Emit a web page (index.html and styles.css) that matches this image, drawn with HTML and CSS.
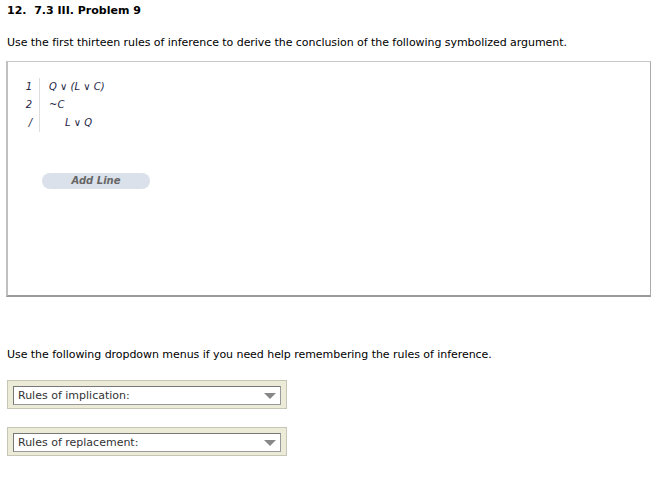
FILE: index.html
```html
<!DOCTYPE html>
<html lang="en">
<head>
    <meta charset="utf-8">
    <title>7.3 III. Problem 9</title>
    <link rel="stylesheet" href="styles.css">
</head>
<body>
    <div id="problem">
        <h1 class="title">12.&nbsp; 7.3 III. Problem 9</h1>
        <p class="instr">Use the first thirteen rules of inference to derive the conclusion of the following symbolized argument.</p>

        <div id="proof">
            <div class="lines">
                <div class="nums">
                    <div>1</div>
                    <div>2</div>
                    <div>/</div>
                </div>
                <div class="formulas">
                    <div>Q &or; (L &or; C)</div>
                    <div>~C</div>
                    <div class="concl">L &or; Q</div>
                </div>
            </div>
            <div class="add-line">Add Line</div>
        </div>

        <p class="instr help">Use the following dropdown menus if you need help remembering the rules of inference.</p>

        <div class="menu">
            <div class="select"><span>Rules of implication:</span><i class="arrow"></i></div>
        </div>
        <div class="menu">
            <div class="select"><span>Rules of replacement:</span><i class="arrow"></i></div>
        </div>
    </div>
</body>
</html>
```

FILE: styles.css
```css
html,body{
    margin: 0;
    background-color: white;
}
#problem{
    padding: 4px 7px;
    font-family: "DejaVu Sans", Verdana, sans-serif;
    font-size: 11px;
    color: #000;
}
#problem .title{
    margin: 0;
    font-size: 11px;
    font-weight: bold;
    line-height: 14px;
}
#problem .instr{
    margin: 18px 0 0 0;
    line-height: 14px;
    letter-spacing: -0.05px;
}
#problem .help{
    margin-top: 51px;
}

#proof{
    margin: 11px 14px 0 -1px;
    height: 233px;
    border: 1px solid #aaa;
    border-top-color: #c8c8c8;
    border-left: 2px solid #c0c0c0;
    border-bottom: 2px solid #999;
    position: relative;
}
#proof .lines{
    display: flex;
    margin-top: 16px;
}
#proof .nums{
    width: 24px;
    padding-right: 7px;
    text-align: right;
    font-style: italic;
    font-size: 10px;
    color: #224;
    border-right: 1px solid #ddd;
    line-height: 18px;
}
#proof .formulas{
    padding-left: 9px;
    font-size: 10px;
    font-style: italic;
    color: #224;
    line-height: 18px;
}
#proof .concl{
    padding-left: 16px;
}
#proof .add-line{
    margin: 41px 0 0 34px;
    width: 108px;
    height: 16px;
    line-height: 16px;
    border-radius: 8px;
    background-color: #dbe1ea;
    text-align: center;
    font-size: 10px;
    font-weight: bold;
    font-style: italic;
    color: #666;
}

.menu{
    margin-top: 18px;
    width: 268px;
    padding: 5px 5px 3px 5px;
    background-color: #ecebd8;
    border: 1px solid #c6c5b6;
}
.menu + .menu{
    margin-top: 18px;
}
.select{
    display: flex;
    justify-content: space-between;
    align-items: center;
    height: 17px;
    padding: 0 4px 0 4px;
    background-color: white;
    border: 1px solid #777;
    border-right-color: #999;
    border-bottom-color: #999;
    color: #333;
}
.select .arrow{
    width: 0;
    height: 0;
    border-left: 6px solid transparent;
    border-right: 6px solid transparent;
    border-top: 6px solid #888;
}
```
